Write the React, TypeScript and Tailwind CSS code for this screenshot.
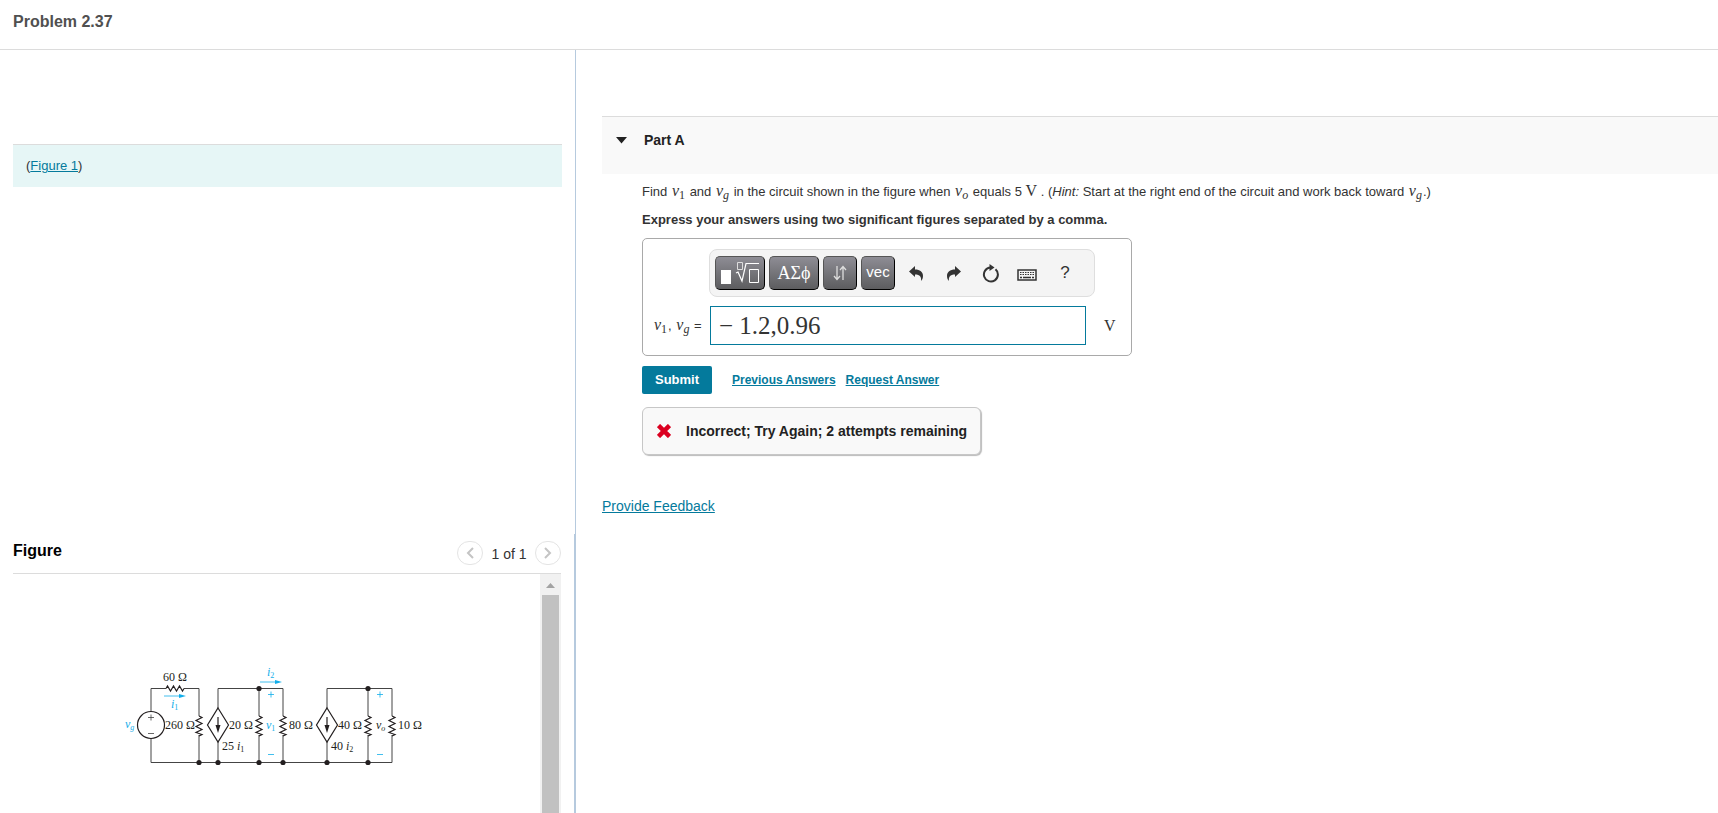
import type { ReactNode } from "react";

function Sub({ base, sub }: { base: string; sub: string }) {
  return (
    <span className="mx-px font-['Liberation_Serif',serif] text-[16px] leading-4">
      <i>{base}</i>
      <sub className="bottom-[-3px] text-[12px] leading-none">
        {sub === "1" ? sub : <i>{sub}</i>}
      </sub>
    </span>
  );
}

function ToolButton({ label, className, children }: { label: string; className: string; children: ReactNode }) {
  return (
    <button
      type="button"
      aria-label={label}
      className={`flex h-[34px] items-center justify-center rounded-[5px] border border-black border-t-[#555] border-l-[#555] bg-linear-to-b from-[#8e8d95] to-[#5d5d5f] text-white ${className}`}
    >
      {children}
    </button>
  );
}

function IconButton({ label, children }: { label: string; children: ReactNode }) {
  return (
    <button type="button" aria-label={label} className="flex h-8 w-5 items-center justify-center text-[#333]">
      {children}
    </button>
  );
}

function Omega({ x, y, value }: { x: number; y: number; value: string }) {
  return (
    <text x={x} y={y}>
      {value} Ω
    </text>
  );
}

function Variable({ x, y, name, sub }: { x: number; y: number; name: string; sub: string }) {
  return (
    <text x={x} y={y} fontStyle="italic">
      {name}
      <tspan dy="2" fontSize="8" fontStyle={/\d/.test(sub) ? "normal" : "italic"}>
        {sub}
      </tspan>
    </text>
  );
}

// x positions of the vertical resistors, and of the dots on the ground rail
const resistors = [79, 139, 163, 248, 272];
const sources = [98, 207];
const groundNodes = [79, 98, 139, 163, 207, 248];

function Circuit() {
  return (
    <svg
      width="310"
      height="115"
      viewBox="0 0 310 115"
      role="img"
      aria-label="Circuit with two dependent current sources"
      className="font-['Liberation_Serif',serif] text-[12px]"
      fill="#231f20"
    >
      <g fill="none" stroke="#444" strokeWidth="1">
        <path d="M31 51.500V28.500H46M64 28.500H79V56" />
        <path stroke="#231f20" strokeWidth="1.200" d="M46 28.500l1.500-2.500 3 5 3-5 3 5 3-5 3 5 1.500-2.500" />
        <path d="M31 78.500V102.500H272V75" />
        <path d="M98 48V28.500H163V56M139 28.500V56M207 48V28.500H272V56M248 28.500V56" />
        <path d="M79 75V102M98 82V102M139 75V102M163 75V102M207 82V102M248 75V102" />
        <circle cx="31" cy="65" r="13.500" stroke="#231f20" strokeWidth="1.200" />
        {resistors.map((x) => (
          <path
            key={x}
            stroke="#231f20"
            strokeWidth="1.200"
            d={`M${x} 56l3 1.500-6 3 6 3-6 3 6 3-6 3 6 2-3 1.500`}
          />
        ))}
        {sources.map((x) => (
          <path key={x} stroke="#231f20" strokeWidth="1.200" d={`M${x} 48l10.500 17-10.500 17-10.500-17zM${x} 57v10`} />
        ))}
      </g>
      {sources.map((x) => (
        <path key={x} d={`M${x - 2.5} 65h5l-2.500 8z`} />
      ))}
      {groundNodes.map((x) => (
        <circle key={x} cx={x} cy="102.500" r="2.600" />
      ))}
      <circle cx="139" cy="28.500" r="2.600" />
      <circle cx="248" cy="28.500" r="2.600" />

      <path d="M28 57.500h6M31 54.500v6M28 73.500h6" stroke="#444" strokeWidth="0.800" />
      <Omega x={43} y={21} value="60" />
      <Omega x={45} y={69} value="260" />
      <Omega x={109} y={69} value="20" />
      <Omega x={169} y={69} value="80" />
      <Omega x={218} y={69} value="40" />
      <Omega x={278} y={69} value="10" />
      <text x="102" y="90">25</text>
      <Variable x={117} y={90} name="i" sub="1" />
      <text x="211" y="90">40</text>
      <Variable x={226} y={90} name="i" sub="2" />
      <Variable x={256} y={69} name="v" sub="o" />

      <g className="fill-[#12aeea]">
        <Variable x={5} y={68} name="v" sub="g" />
        <Variable x={51} y={48} name="i" sub="1" />
        <Variable x={147} y={16} name="i" sub="2" />
        <Variable x={146} y={69} name="v" sub="1" />
        <path d="M59 34l7 2-7 2zM155 20l7 2-7 2z" />
        <path
          d="M44 36h16M140 22h16M148 34.500h6M151 31.500v6M148 94.500h6M257 34.500h6M260 31.500v6M257 94.500h6"
          stroke="#12aeea"
          strokeWidth="0.800"
        />
      </g>
    </svg>
  );
}

function FigurePanel() {
  return (
    <section className="flex grow flex-col border-r-2 border-[#b6cade] pr-[13px] pl-[13px]">
      <div className="flex h-10 items-start justify-between border-b border-[#dcdcdc] pt-[7px]">
        <h2 className="text-[16px] leading-5 font-bold text-black">Figure</h2>
        <div className="flex items-center">
          <button
            type="button"
            aria-label="Previous figure"
            className="flex h-6 w-[26px] items-center justify-center rounded-full border border-[#e4e4e4] text-[#c4c4c4]"
          >
            <svg width="8" height="12" viewBox="0 0 8 12" fill="none" stroke="currentColor" strokeWidth="2">
              <path d="M7 1L2 6l5 5" />
            </svg>
          </button>
          <span className="w-[52px] pt-[2px] text-center text-[14px] leading-5 text-[#333]">1 of 1</span>
          <button
            type="button"
            aria-label="Next figure"
            className="flex h-6 w-[26px] items-center justify-center rounded-full border border-[#e4e4e4] text-[#c4c4c4]"
          >
            <svg width="8" height="12" viewBox="0 0 8 12" fill="none" stroke="currentColor" strokeWidth="2">
              <path d="M1 1l5 5-5 5" />
            </svg>
          </button>
        </div>
      </div>
      <div className="flex grow">
        <div className="grow pt-[86px] pl-[107px]">
          <Circuit />
        </div>
        {/* Scrollbar */}
        <div className="flex w-[21px] flex-col items-center bg-[#f1f1f1]">
          <svg width="9" height="21" viewBox="0 0 9 21" fill="#a3a3a3">
            <path d="M0 14l4.500-5L9 14z" />
          </svg>
          <div className="w-[17px] grow bg-[#c1c1c1]" />
        </div>
      </div>
    </section>
  );
}

function AnswerBox() {
  return (
    <div className="flex w-[490px] flex-col rounded-[5px] border border-[#a9a9a9] pt-[10px] pb-[10px]">
      <div className="ml-[66px] flex h-12 w-[386px] items-center gap-1 rounded-lg border border-[#dedede] bg-[#f4f4f4] pl-[5px]">
        <ToolButton label="Templates" className="w-[50px]">
          <svg width="38" height="24" viewBox="0 0 38 24" fill="none" stroke="#fff">
            <path d="M0 9h10v14H0z" fill="#fff" stroke="none" />
            <path d="M16.500 1.500h5v7h-5z" stroke="#ddd" />
            <path d="M15 12l2-1 4 9 4-17.500h13" strokeWidth="1.200" />
            <path d="M28.500 8.500h9v13h-9z" />
          </svg>
        </ToolButton>
        <ToolButton label="Symbols" className="w-[50px] font-['Liberation_Serif',serif] text-[18px]">
          ΑΣϕ
        </ToolButton>
        <ToolButton label="Subscript and superscript" className="w-[34px]">
          <svg width="14" height="16" viewBox="0 0 14 16" fill="none" stroke="#ddd" strokeWidth="1.300">
            <path d="M4 1v13M1 11l3 3.500L7 11M10 15V2M7 5l3-3.500L13 5" />
          </svg>
        </ToolButton>
        <ToolButton label="Vectors" className="w-[34px] pb-[2px] text-[15px]">
          vec
        </ToolButton>
        <div className="ml-[7px] flex gap-[17px]">
          <IconButton label="Undo">
            <svg width="14" height="15" viewBox="0 0 14 15" fill="currentColor">
              <path d="M0 5.500L6 0v3.500c5 0 8 2.500 8 6.500 0 2-.8 4-2 5 .6-4-1-6.500-6-6.500V11z" />
            </svg>
          </IconButton>
          <IconButton label="Redo">
            <svg width="14" height="15" viewBox="0 0 14 15" fill="currentColor" className="ml-[2px]">
              <path d="M14 5.500L8 0v3.500c-5 0-8 2.500-8 6.500 0 2 .8 4 2 5-.6-4 1-6.500 6-6.500V11z" />
            </svg>
          </IconButton>
          <IconButton label="Reset">
            <svg width="18" height="19" viewBox="0 0 18 19" fill="none" stroke="currentColor" strokeWidth="2">
              <path d="M14.500 5.200A7 7 0 1 1 9.500 3.500" />
              <path d="M8.500 0l5 3.500-5 3.500z" fill="currentColor" stroke="none" />
            </svg>
          </IconButton>
          <IconButton label="Keyboard">
            <svg width="20" height="12" viewBox="0 0 20 12" fill="none" stroke="currentColor" className="mt-1">
              <path d="M1 1h18v10H1z" strokeWidth="1.500" />
              <path d="M3 3.500h14M3 5.500h14" strokeWidth="1.200" strokeDasharray="1.500 1" />
              <path d="M3 8.500h2M6 8.500h8M15 8.500h2" strokeWidth="1.500" />
            </svg>
          </IconButton>
          <IconButton label="Help">
            <span className="pl-[2px] text-[17px]">?</span>
          </IconButton>
        </div>
      </div>
      <div className="mt-[9px] flex items-center">
        <label htmlFor="answer" className="w-[67px] pl-[10px] text-[13px] whitespace-nowrap text-[#333]">
          <Sub base="v" sub="1" />, <Sub base="v" sub="g" /> =
        </label>
        <input
          id="answer"
          type="text"
          defaultValue="− 1.2,0.96"
          className="h-[39px] w-[376px] border border-[#047a9c] px-2 font-['Liberation_Serif',serif] text-[25px] text-[#333] outline-none"
        />
        <span className="ml-[18px] font-['Liberation_Serif',serif] text-[16px] text-[#333]">V</span>
      </div>
    </div>
  );
}

export default function App() {
  return (
    <div className="flex min-h-screen flex-col bg-white font-['Liberation_Sans',Arial,sans-serif] text-[13px] text-[#333]">
      <header className="h-[50px] border-b border-[#dcdcdc] pt-3 pl-[13px]">
        <h1 className="text-[16px] leading-5 font-bold text-[#505050]">Problem 2.37</h1>
      </header>

      <div className="flex grow">
        <aside className="flex w-144 shrink-0 flex-col">
          <div className="h-[484px] border-r border-[#b6cade] pt-[94px] pr-[13px] pl-[13px]">
            <div className="h-[43px] border-t border-[#dcdcdc] bg-[#e6f6f6] pt-[11px] pl-[13px] leading-5">
              (
              <a href="#figure" className="text-[#047a9c] underline">
                Figure 1
              </a>
              )
            </div>
          </div>
          <FigurePanel />
        </aside>

        <main className="grow pt-[66px] pl-[26px]">
          <div className="flex h-[58px] items-start border-t border-[#dcdcdc] bg-[#f9f9f9] pt-[13px] pl-[14px]">
            <button
              type="button"
              aria-expanded="true"
              className="flex items-center gap-[17px] text-[14px] leading-5 font-bold text-[#222]"
            >
              <svg width="11" height="7" viewBox="0 0 11 7" fill="currentColor">
                <path d="M0 0h11L5.500 6.500z" />
              </svg>
              Part A
            </button>
          </div>

          <div className="pl-10">
            <p className="mt-2 h-5 leading-5">
              Find <Sub base="v" sub="1" /> and <Sub base="v" sub="g" /> in the circuit shown in the figure when{" "}
              <Sub base="v" sub="o" /> equals 5{" "}
              <span className="font-['Liberation_Serif',serif] text-[16px] leading-4">V</span> . (<i>Hint:</i> Start at
              the right end of the circuit and work back toward <Sub base="v" sub="g" />.)
            </p>
            <p className="mt-2 mb-2 leading-5 font-bold">
              Express your answers using two significant figures separated by a comma.
            </p>

            <AnswerBox />

            <div className="mt-[10px] flex items-center text-[12px] font-bold">
              <button type="button" className="mr-5 h-7 w-[70px] rounded-[2px] bg-[#047a9c] text-[13px] text-white">
                Submit
              </button>
              <a href="#previous" className="mr-[10px] text-[#047a9c] underline">
                Previous Answers
              </a>
              <a href="#request" className="text-[#047a9c] underline">
                Request Answer
              </a>
            </div>

            <div
              role="status"
              className="mt-[13px] flex h-12 w-fit items-center gap-[15px] rounded-md border border-[#c7c7c7] bg-[#f9f9f9] pr-[13px] pl-[14px] text-[14px] font-bold text-[#222] shadow-[1px_1px_1px_#bbb]"
            >
              <svg width="14" height="14" viewBox="0 0 14 14" stroke="#db0020" strokeWidth="4.500">
                <path d="M1.500 1.500l11 11M12.500 1.500l-11 11" />
              </svg>
              Incorrect; Try Again; 2 attempts remaining
            </div>
          </div>

          <a href="#feedback" className="mt-[41px] inline-block text-[14px] leading-5 text-[#047a9c] underline">
            Provide Feedback
          </a>
        </main>
      </div>
    </div>
  );
}
